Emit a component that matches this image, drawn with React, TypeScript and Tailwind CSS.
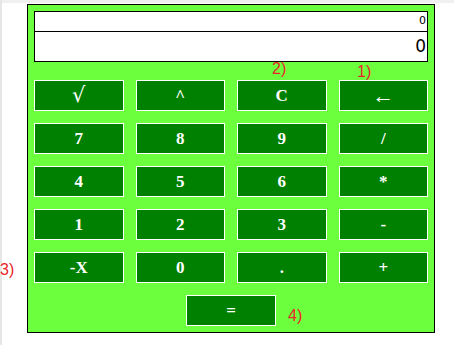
const keys: string[] = [
  "√", "^", "C", "←",
  "7", "8", "9", "/",
  "4", "5", "6", "*",
  "1", "2", "3", "-",
  "-X", "0", ".", "+",
];

// a few glyphs render bigger in the original (fallback font)
const special: Record<string, string> = {
  "√": "text-[21px] font-normal font-['DejaVu_Serif',serif]",
  "←": "text-[22px] font-normal font-['Liberation_Sans',sans-serif]",
};

const Key = ({ label }: { label: string }) => (
  <button
    className={
      "h-[31px] w-full bg-[#008000] border border-white text-white leading-none flex items-center justify-center " +
      (special[label] ?? "text-[17px] font-bold font-['Liberation_Serif',serif]")
    }
  >
    {label}
  </button>
);

export default function App() {
  return (
    <div className="relative w-[454px] h-[345px] bg-white overflow-hidden">
      {/* window chrome strips */}
      <div className="h-[3px] w-full bg-[#f0f0f0]" />
      <div className="absolute left-0 top-0 h-full w-[2px] bg-[#e6e6e6]" />

      <div className="ml-[27px] mt-[1px] w-[408px] h-[329px] border border-black bg-[#6bff3d] p-[6px]">
        {/* display */}
        <div className="font-['DejaVu_Sans',sans-serif] text-black">
          <div className="h-[21px] border border-black bg-white flex items-center justify-end pr-[1px] text-[11px]">
            0
          </div>
          <div className="h-[30px] border border-t-0 border-black bg-white flex items-center justify-end pr-[1px] text-[17px]">
            0
          </div>
        </div>

        {/* keys */}
        <div className="mt-[18px] grid grid-cols-4 gap-3">
          {keys.map((k) => (
            <Key key={k} label={k} />
          ))}
        </div>

        <div className="mt-3 flex justify-center">
          <div className="w-[89.5px]">
            <Key label="=" />
          </div>
        </div>
      </div>

      {/* annotations */}
      <div className="absolute inset-0 pointer-events-none font-['Liberation_Sans',sans-serif] text-[16px] text-[#e8262b] leading-none">
        <span className="absolute left-[272px] top-[61px]">2)</span>
        <span className="absolute left-[357px] top-[64px]">1)</span>
        <span className="absolute left-[0px] top-[262px]">3)</span>
        <span className="absolute left-[288px] top-[308px]">4)</span>
      </div>
    </div>
  );
}
